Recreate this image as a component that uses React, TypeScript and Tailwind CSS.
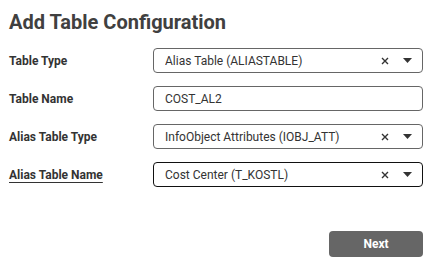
import { useState } from 'react';

type Row = {
  label: string;
  value: string;
  kind: 'select' | 'input';
  focused?: boolean;
};

const rows: Row[] = [
  { label: 'Table Type', value: 'Alias Table (ALIASTABLE)', kind: 'select' },
  { label: 'Table Name', value: 'COST_AL2', kind: 'input' },
  { label: 'Alias Table Type', value: 'InfoObject Attributes (IOBJ_ATT)', kind: 'select' },
  { label: 'Alias Table Name', value: 'Cost Center (T_KOSTL)', kind: 'select', focused: true },
];

function ClearIcon() {
  return (
    <svg width="8" height="8" viewBox="0 0 8 8" className="block">
      <path d="M1 1 L7 7 M7 1 L1 7" stroke="#333" strokeWidth="1.4" />
    </svg>
  );
}

function CaretIcon() {
  return (
    <svg width="9" height="5" viewBox="0 0 9 5" className="block">
      <path d="M0 0 H9 L4.5 5 Z" fill="#333" />
    </svg>
  );
}

export default function App() {
  const [values] = useState(rows.map((r) => r.value));

  return (
    <main className="w-[440px] h-[264px] bg-white font-['Roboto',sans-serif] text-[#333] pl-[9px] pr-[17px] pt-[10px]">
      <h1 className="text-[20px] leading-[24px] font-bold text-[#404040]">
        Add Table Configuration
      </h1>

      {/* 폼 영역 */}
      <div className="flex flex-col gap-[13px] mt-[14px]">
        {rows.map((row, i) => (
          <div key={row.label} className="flex items-center">
            <label
              className={
                'w-[144px] text-[12px] font-bold text-[#333] ' +
                (row.focused ? 'underline underline-offset-[3px] decoration-[1px]' : '')
              }
            >
              {row.label}
            </label>
            <div
              className={
                'flex-1 h-[25px] flex items-center rounded-[4px] border pl-[11px] pr-[10px] ' +
                (row.focused ? 'border-[#111]' : 'border-[#666]')
              }
            >
              <span className="flex-1 text-[12px] text-[#333] truncate">
                {row.focused && (
                  <span className="inline-block w-px h-[14px] bg-[#333] align-middle mr-px -ml-[2px]" />
                )}
                {values[i]}
              </span>
              {row.kind === 'select' && (
                <div className="flex items-center gap-[14px]">
                  <ClearIcon />
                  <CaretIcon />
                </div>
              )}
            </div>
          </div>
        ))}
      </div>

      {/* 하단 버튼 */}
      <div className="flex justify-end mt-[44px]">
        <button className="w-[94px] h-[26px] rounded-[4px] bg-[#666] text-white text-[12px] font-bold">
          Next
        </button>
      </div>
    </main>
  );
}
